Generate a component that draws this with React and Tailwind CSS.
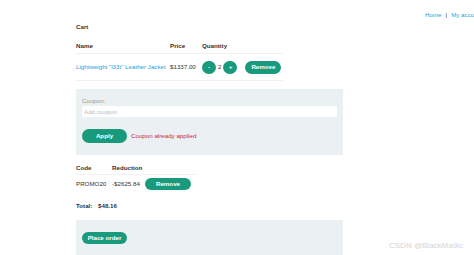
export default function App() {
  return (
    <div className="relative w-[474px] h-[255px] overflow-hidden bg-white text-[6.2px] leading-[8px] text-[#333] font-['Liberation_Sans',Arial,sans-serif]">
      <div className="h-[22px] pt-[11px] pl-[425px] whitespace-nowrap flex gap-[4px] text-[#2a9fd6]">
        <span>Home</span>
        <span className="text-[#333]">|</span>
        <span>My account</span>
      </div>

      <div className="pl-[76px]">
        <h2 className="mt-[1px] font-bold">Cart</h2>

        <div className="mt-[11px] w-[207px]">
          <div className="flex font-bold pb-[3px] border-b border-[#eef2f4]">
            <div className="w-[94px]">Name</div>
            <div className="w-[32px]">Price</div>
            <div>Quantity</div>
          </div>
          <div className="flex items-center h-[27px] border-b border-[#eef2f4]">
            <div className="w-[94px] text-[#2a9fd6] whitespace-nowrap">Lightweight "l33t" Leather Jacket</div>
            <div className="w-[32px]">$1337.00</div>
            <div className="flex items-center">
              <button className="w-[14px] h-[13px] rounded-full bg-[#1a9a7c] text-white font-bold">-</button>
              <span className="mx-[2px]">2</span>
              <button className="w-[14px] h-[13px] rounded-full bg-[#1a9a7c] text-white font-bold">+</button>
              <button className="ml-[8px] w-[36px] h-[13px] rounded-full bg-[#1a9a7c] text-white font-bold">Remove</button>
            </div>
          </div>
        </div>

        <div className="mt-[8px] w-[267px] h-[66px] bg-[#ebf0f2] px-[6px] pt-[8px]">
          <div className="text-[#999]">Coupon:</div>
          <input
            className="mt-[1px] w-full h-[11px] bg-white px-[2px] text-[6.2px] outline-none placeholder:text-[#bbb]"
            placeholder="Add coupon"
          />
          <div className="mt-[12px] flex items-center">
            <button className="w-[45px] h-[14px] rounded-full bg-[#1a9a7c] text-white font-bold">Apply</button>
            <span className="ml-[4px] text-[#c62a3a]">Coupon already applied</span>
          </div>
        </div>

        <div className="mt-[9px] w-[120px]">
          <div className="flex font-bold pb-[2px] border-b border-[#eef2f4]">
            <div className="w-[36px]">Code</div>
            <div>Reduction</div>
          </div>
          <div className="flex items-center h-[18px]">
            <div className="w-[36px]">PROMO20</div>
            <div className="w-[33px]">-$2625.84</div>
            <button className="w-[46px] h-[12px] rounded-full bg-[#1a9a7c] text-white font-bold">Remove</button>
          </div>
        </div>

        <div className="mt-[9px] flex font-bold">
          <span className="w-[22px]">Total:</span>
          <span>$48.16</span>
        </div>

        <div className="mt-[10px] w-[267px] h-[40px] bg-[#ebf0f2] px-[6px] pt-[12px]">
          <button className="w-[45px] h-[12px] rounded-full bg-[#1a9a7c] text-white font-bold">Place order</button>
        </div>
      </div>

      <div className="absolute left-[389px] top-[241px] text-[8px] leading-[10px] text-[#d4d4d4] whitespace-nowrap">
        CSDN @BlackMa9ic
      </div>
    </div>
  );
}
